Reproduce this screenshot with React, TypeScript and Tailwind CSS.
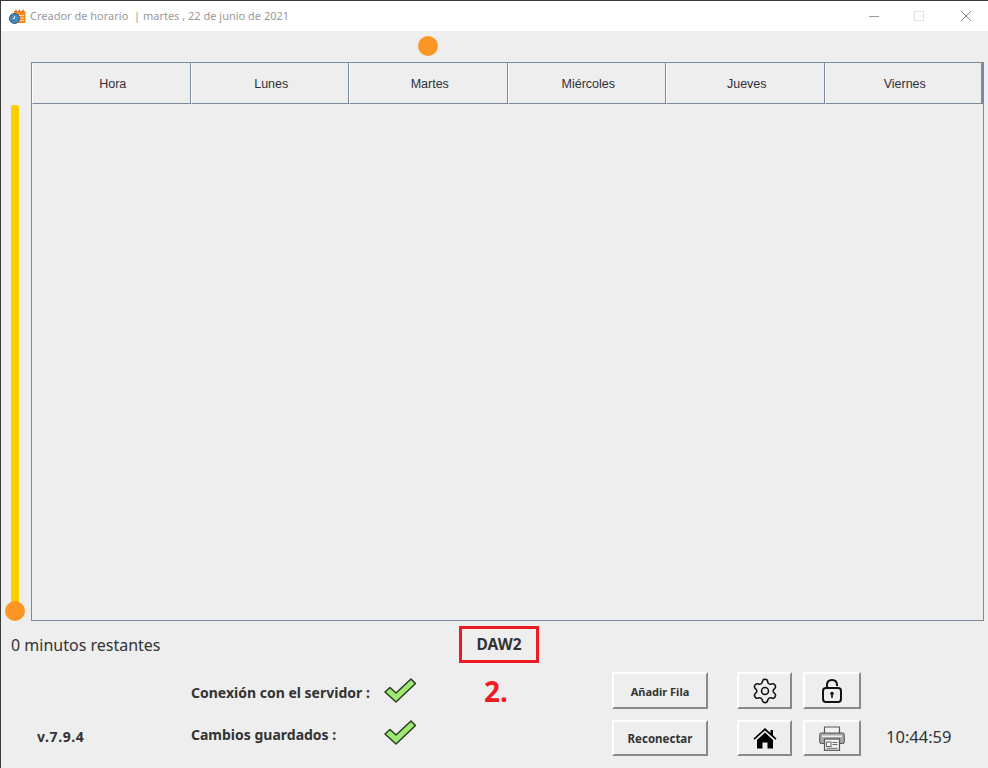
import { Settings } from "lucide-react";

const days = ["Hora", "Lunes", "Martes", "Miércoles", "Jueves", "Viernes"];

function Check() {
  return (
    <svg width="32" height="25" viewBox="0 0 32 25" className="block">
      <path
        d="M1 14 L6 9.5 L12 15 L27 1 L31.5 5.5 L12 24 Z"
        fill="#9ee96f"
        stroke="#2b3a24"
        strokeWidth="1.5"
        strokeLinejoin="round"
      />
    </svg>
  );
}

function OpenLock() {
  return (
    <svg width="20" height="24" viewBox="0 0 20 24" fill="none" className="block">
      <path d="M5 9 V6 C5 2.8 7.2 1 10 1 C12.8 1 15 2.8 15 6 V7" stroke="#111" strokeWidth="2" />
      <rect x="1" y="9" width="18" height="14" rx="3" stroke="#111" strokeWidth="2" />
      <circle cx="10" cy="14.5" r="1.8" fill="#111" />
      <rect x="9.2" y="15" width="1.6" height="4" fill="#111" />
    </svg>
  );
}

function HomeIcon() {
  return (
    <svg width="24" height="22" viewBox="0 0 24 22" className="block">
      <path d="M0.5 11.5 L12 1 L17.5 6 V3 H20 V8.3 L23.5 11.5 L22.5 12.8 L12 3.4 L1.5 12.8 Z" fill="#000" />
      <path d="M4 13 L12 5.6 L20 13 V21.5 H14.5 V15.5 H9.5 V21.5 H4 Z" fill="#000" />
    </svg>
  );
}

function PrinterIcon() {
  return (
    <svg width="26" height="25" viewBox="0 0 26 25" fill="none" className="block">
      <path d="M5.5 7 V1 H20.5 V7" stroke="#555" strokeWidth="1.2" fill="#f3f3f3" />
      <rect x="0.7" y="7" width="24.6" height="10.5" rx="1.5" fill="#a8a8a8" stroke="#555" />
      <rect x="3" y="9.5" width="20" height="1.5" fill="#eeeeee" />
      <rect x="5.5" y="13" width="15" height="11.3" fill="#f3f3f3" stroke="#555" strokeWidth="1.2" />
      <rect x="7.5" y="16" width="4.5" height="4.5" stroke="#666" />
      <path d="M13.5 16.5 H18.5 M13.5 18.5 H18.5 M7.5 22.3 H18.5" stroke="#666" />
    </svg>
  );
}

function RaisedButton({ className, children }: { className: string; children: React.ReactNode }) {
  return (
    <button className={`flex items-center justify-center border-2 border-t-white border-l-white border-r-[#8a8a8a] border-b-[#8a8a8a] bg-[#eeeeee] ${className}`}>
      {children}
    </button>
  );
}

export default function App() {
  return (
    <div className="w-[988px] h-[768px] overflow-hidden flex flex-col bg-[#eeeeee] border-t border-l border-[#3a3a3a] font-['Liberation_Sans',sans-serif]">
      {/* Title bar */}
      <div className="h-[30px] shrink-0 bg-white flex items-center pl-[8px]">
        <svg width="17" height="15" viewBox="0 0 17 15" className="block">
          <rect x="5" y="2" width="11.5" height="12" fill="#f58a1f" />
          <path d="M7 0.5 V3 M10.5 0.5 V3 M14 0.5 V3" stroke="#c9651a" strokeWidth="1.2" />
          <path d="M8 6.5 H15 M8 9 H15 M8 11.5 H15" stroke="#ffd9a8" />
          <circle cx="5.5" cy="9.5" r="5" fill="#4a86b8" stroke="#2d5a80" />
          <path d="M5.5 7 V9.5 H3.5" stroke="#d6e8f5" fill="none" />
        </svg>
        <span className="ml-[4px] text-[11px] text-[#99999b] font-['Noto_Sans',sans-serif] whitespace-pre">
          Creador de horario  | martes , 22 de junio de 2021
        </span>
        <div className="ml-auto flex items-center text-[#9a9a9a]">
          <div className="w-[10px] h-px bg-[#9a9a9a] mr-[35px]" />
          <div className="w-[10px] h-[10px] border border-[#e2e2e2] mr-[36px]" />
          <svg width="12" height="12" viewBox="0 0 12 12" className="block mr-[16px]">
            <path d="M1 1 L11 11 M11 1 L1 11" stroke="#8a8a8a" />
          </svg>
        </div>
      </div>

      {/* Horizontal slider knob */}
      <div className="h-[31px] shrink-0 pt-[5px] pl-[417px]">
        <div className="w-5 h-5 rounded-full bg-[#fb9526]" />
      </div>

      {/* Slider and table */}
      <div className="flex h-[559px] shrink-0">
        <div className="w-[30px] shrink-0 pl-[4px] pt-[43px] flex flex-col items-start">
          <div className="ml-[6px] w-2 h-[503px] bg-[#ffcc00] rounded-t-[2px]" />
          <div className="-mt-[1px] w-5 h-5 rounded-full bg-[#fb9526] relative" />
        </div>
        <div className="w-[953px] h-full border border-[#7c8a9c]">
          <div className="grid grid-cols-6 h-[41px]">
            {days.map((d) => (
              <div
                key={d}
                className="flex items-center justify-center pl-[3px] pt-[2px] border-l border-white border-r border-r-[#7c8a9c] border-b border-b-[#7c8a9c] last:border-r-2 text-[12.5px] text-[#2f2f3a]"
              >
                {d}
              </div>
            ))}
          </div>
        </div>
      </div>

      {/* Minutes and group name */}
      <div className="h-[51px] shrink-0 flex items-start pt-[5px]">
        <span className="w-[458px] pl-[10px] pt-[9px] text-[16px] leading-[20px] text-[#333333] font-['Noto_Sans',sans-serif]">
          0 minutos restantes
        </span>
        <div className="w-[80px] h-[37px] border-[3px] border-[#ed1c24] flex items-center justify-center text-[15.5px] font-bold text-[#333333] font-['Noto_Sans',sans-serif]">
          DAW2
        </div>
      </div>

      {/* Status and actions */}
      <div className="flex-1 grid grid-cols-[190px_193px_228px_125px_66px_1fr] grid-rows-[37px_36px] gap-y-[11px] font-['Noto_Sans',sans-serif]">
        <div />
        <div className="flex items-center pt-[4px] text-[14px] font-bold text-[#333333] whitespace-nowrap">Conexión con el servidor :</div>
        <div className="flex items-center">
          <Check />
          <span className="ml-[68px] text-[28px] leading-none font-bold text-[#ed1c24]">2.</span>
        </div>
        <div>
          <RaisedButton className="w-[96px] h-[37px] pt-[4px] text-[11px] font-bold text-[#333333]">Añadir Fila</RaisedButton>
        </div>
        <div>
          <RaisedButton className="w-[55px] h-[37px]">
            <Settings size={28} strokeWidth={1.3} color="#111111" />
          </RaisedButton>
        </div>
        <div>
          <RaisedButton className="w-[58px] h-[37px]">
            <OpenLock />
          </RaisedButton>
        </div>

        <div className="flex items-center pl-[36px] pb-[4px] text-[14px] tracking-[0.6px] font-bold text-[#333333]">v.7.9.4</div>
        <div className="flex items-center pb-[8px] text-[14px] font-bold text-[#333333] whitespace-nowrap">Cambios guardados :</div>
        <div className="flex items-center pb-[12px]">
          <Check />
        </div>
        <div>
          <RaisedButton className="w-[96px] h-[36px] pt-[2px] text-[11.5px] font-bold text-[#333333]">Reconectar</RaisedButton>
        </div>
        <div>
          <RaisedButton className="w-[55px] h-[36px]">
            <HomeIcon />
          </RaisedButton>
        </div>
        <div className="flex items-center">
          <RaisedButton className="w-[58px] h-[36px] shrink-0">
            <PrinterIcon />
          </RaisedButton>
          <span className="ml-[25px] pb-[2px] text-[16.5px] text-[#333333]">10:44:59</span>
        </div>
      </div>
    </div>
  );
}
